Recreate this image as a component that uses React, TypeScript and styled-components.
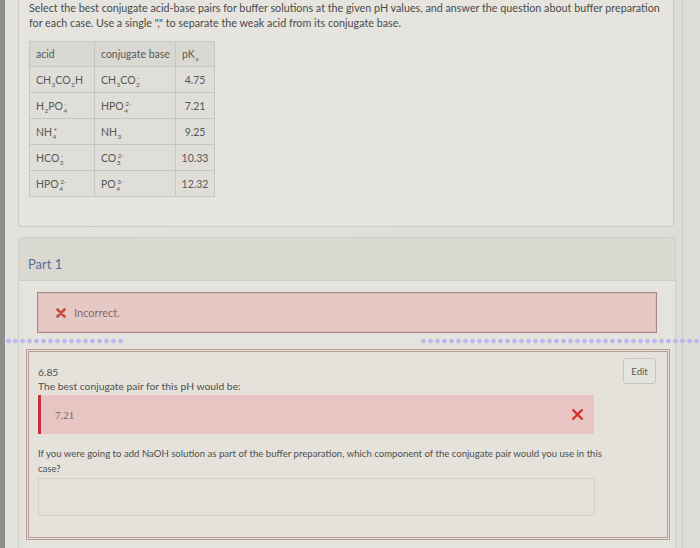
import React from 'react';
import styled, { createGlobalStyle } from 'styled-components';

const GlobalStyle = createGlobalStyle`
  html, body { margin: 0; padding: 0; }
  body {
    background: #dfded8;
    font-family: Lato, "Open Sans", "Liberation Sans", sans-serif;
  }
`;

const Screen = styled.div`
  position: relative;
  width: 700px;
  height: 548px;
  overflow: hidden;
  box-sizing: border-box;
  border-left: 5px solid #8d8d8b;
  background: linear-gradient(90deg, #e3e2dc 0%, #dedcd6 100%);
`;

const Column = styled.div`
  display: flex;
  flex-direction: column;
  width: 665px;
  height: 100%;
  margin-left: 13px;
  box-sizing: border-box;
  border-right: 1px solid #cdccc5;
`;

const QuestionPanel = styled.section`
  width: 656px;
  box-sizing: border-box;
  border: 1px solid #cdccc5;
  border-top: 0;
  border-radius: 0 0 4px 4px;
  background: #e5e4de;
  padding: 0 10px 29px 10px;
`;

const Prompt = styled.p`
  margin: 0;
  font-size: 10.75px;
  line-height: 15px;
  color: #4b4b4b;
  white-space: nowrap;
`;

const Table = styled.table`
  margin-top: 11px;
  border-collapse: collapse;
  border: 1px solid #bdbcb5;
`;

const Cell = styled.td<{ $w: number; $center?: boolean; $head?: boolean }>`
  width: ${p => p.$w}px;
  height: ${p => (p.$head ? 25 : 26)}px;
  box-sizing: border-box;
  padding: 0 ${p => (p.$center ? 0 : 5)}px 0 ${p => (p.$center ? 0 : 6)}px;
  border: 1px solid #c7c6bf;
  background: ${p => (p.$head ? '#d9d8d2' : '#dfded8')};
  font-size: 10.5px;
  line-height: 14px;
  font-weight: normal;
  color: #585858;
  text-align: ${p => (p.$center ? 'center' : 'left')};
  white-space: nowrap;
`;

const Scripts = styled.span`
  display: inline-flex;
  flex-direction: column;
  align-items: flex-start;
  vertical-align: middle;
  font-size: 6.5px;
  line-height: 7px;
  margin: -7px 0 -7px 0.5px;
`;

const Script = styled.span<{ $up?: boolean }>`
  display: block;
  height: 7px;
  margin-left: ${p => (p.$up ? 1 : 0)}px;
`;

const PartPanel = styled.section`
  flex: 1;
  width: 658px;
  margin-top: 10px;
  box-sizing: border-box;
  border: 1px solid #cfcec7;
  border-bottom: 0;
  border-radius: 4px 4px 0 0;
  background: #e4e3dd;
`;

const PartHeader = styled.h2`
  margin: 0;
  height: 43px;
  box-sizing: border-box;
  padding: 18px 9px 0;
  font-size: 13px;
  line-height: 16px;
  font-weight: normal;
  color: #5a6d9b;
  background: #d9d8d1;
  border-bottom: 1px solid #cfcec7;
`;

const PartBody = styled.div`
  padding: 11px 5px 0 7px;
`;

const Feedback = styled.div`
  display: flex;
  align-items: center;
  gap: 8px;
  height: 41px;
  box-sizing: border-box;
  margin: 0 13px 0 11px;
  padding-left: 18px;
  border: 1px solid #a98480;
  box-shadow: inset 0 0 0 1px #dcbcb8;
  background: #e6c8c4;
`;

const FeedbackText = styled.span`
  font-size: 11px;
  color: #7e6c6b;
`;

const AnswerBox = styled.div`
  display: flex;
  margin-top: 16px;
  box-sizing: border-box;
  padding: 6px 11px 21px 9px;
  border: 3px double #b59d96;
  background: #e4e2db;
`;

const AnswerMain = styled.div`
  width: 558px;
  padding-top: 7px;
`;

const Line = styled.div`
  font-size: 10.3px;
  line-height: 14px;
  color: #4f4f4f;
  white-space: nowrap;
`;

const Response = styled.div<{ $wrong?: boolean }>`
  display: flex;
  align-items: center;
  justify-content: space-between;
  width: 556px;
  height: 39px;
  margin-top: 2px;
  box-sizing: border-box;
  padding: 0 10px 0 14px;
  border-left: 3px solid ${p => (p.$wrong ? '#c4313a' : '#7aa65a')};
  background: ${p => (p.$wrong ? '#e8c5c2' : '#d6e6cc')};
`;

const ResponseValue = styled.span`
  font-family: "Liberation Serif", "DejaVu Serif", serif;
  font-size: 11px;
  color: #6a6a6a;
`;

const Question = styled.p`
  margin: 12px 0 0;
  font-size: 9.6px;
  line-height: 15px;
  color: #4f4f4f;
  white-space: nowrap;
`;

const InputBox = styled.div`
  width: 557px;
  height: 38px;
  margin-top: 2px;
  box-sizing: border-box;
  border: 1px solid #d3d2cb;
  background: #e3e1d9;
`;

const EditButton = styled.button`
  display: flex;
  align-items: center;
  justify-content: center;
  width: 33px;
  height: 26px;
  margin-left: auto;
  padding: 0;
  box-sizing: border-box;
  border: 1px solid #c4c3bc;
  border-radius: 3px;
  background: #e5e4de;
  font-family: inherit;
  font-size: 9.5px;
  color: #555;
`;

const Dots = styled.div<{ $left: number; $width: number }>`
  position: absolute;
  top: 338px;
  left: ${p => p.$left}px;
  width: ${p => p.$width}px;
  height: 6px;
  opacity: 0.85;
  background: radial-gradient(circle, #b6b1f0 2.1px, transparent 2.7px) 0 0 / 7px 6px repeat-x;
`;

const Ion = ({ sub, sup }: { sub?: string; sup?: string }) => (
  <Scripts>
    <Script $up>{sup || '\u00a0'}</Script>
    <Script>{sub || '\u00a0'}</Script>
  </Scripts>
);

const CrossSmall = () => (
  <svg width="10" height="10" viewBox="0 0 10 10">
    <path d="M1.5 1.5 L8.5 8.5 M8.5 1.5 L1.5 8.5" stroke="#c84a3d" strokeWidth="2.6" strokeLinecap="round" />
  </svg>
);

const CrossBig = () => (
  <svg width="13" height="13" viewBox="0 0 13 13">
    <path d="M1.5 1.5 L11.5 11.5 M11.5 1.5 L1.5 11.5" stroke="#d3302d" strokeWidth="2.4" />
  </svg>
);

const rows: [React.ReactNode, React.ReactNode, string][] = [
  [<>CH<Ion sub="3" />CO<Ion sub="2" />H</>, <>CH<Ion sub="3" />CO<Ion sub="2" sup="-" /></>, '4.75'],
  [<>H<Ion sub="2" />PO<Ion sub="4" sup="-" /></>, <>HPO<Ion sub="4" sup="2-" /></>, '7.21'],
  [<>NH<Ion sub="4" sup="+" /></>, <>NH<Ion sub="3" /></>, '9.25'],
  [<>HCO<Ion sub="3" sup="-" /></>, <>CO<Ion sub="3" sup="2-" /></>, '10.33'],
  [<>HPO<Ion sub="4" sup="2-" /></>, <>PO<Ion sub="4" sup="3-" /></>, '12.32'],
];

export default function App() {
  return (
    <>
      <GlobalStyle />
      <Screen>
        <Column>
          <QuestionPanel>
            <Prompt>
              Select the best conjugate acid-base pairs for buffer solutions at the given pH values, and answer the question about buffer preparation
              <br />
              for each case. Use a single "," to separate the weak acid from its conjugate base.
            </Prompt>
            <Table>
              <tbody>
                <tr>
                  <Cell as="th" $w={65} $head>acid</Cell>
                  <Cell as="th" $w={81} $head>conjugate base</Cell>
                  <Cell as="th" $w={39} $head>pK<Ion sub="a" /></Cell>
                </tr>
                {rows.map(([acid, base, pka]) => (
                  <tr key={pka}>
                    <Cell $w={65}>{acid}</Cell>
                    <Cell $w={81}>{base}</Cell>
                    <Cell $w={39} $center>{pka}</Cell>
                  </tr>
                ))}
              </tbody>
            </Table>
          </QuestionPanel>

          <PartPanel>
            <PartHeader>Part 1</PartHeader>
            <PartBody>
              <Feedback>
                <CrossSmall />
                <FeedbackText>Incorrect.</FeedbackText>
              </Feedback>
              <AnswerBox>
                <AnswerMain>
                  <Line>6.85</Line>
                  <Line>The best conjugate pair for this pH would be:</Line>
                  <Response $wrong>
                    <ResponseValue>7.21</ResponseValue>
                    <CrossBig />
                  </Response>
                  <Question>
                    If you were going to add NaOH solution as part of the buffer preparation, which component of the conjugate pair would you use in this
                    <br />
                    case?
                  </Question>
                  <InputBox />
                </AnswerMain>
                <EditButton>Edit</EditButton>
              </AnswerBox>
            </PartBody>
          </PartPanel>
        </Column>
        <Dots $left={0} $width={120} />
        <Dots $left={415} $width={285} />
      </Screen>
    </>
  );
}
